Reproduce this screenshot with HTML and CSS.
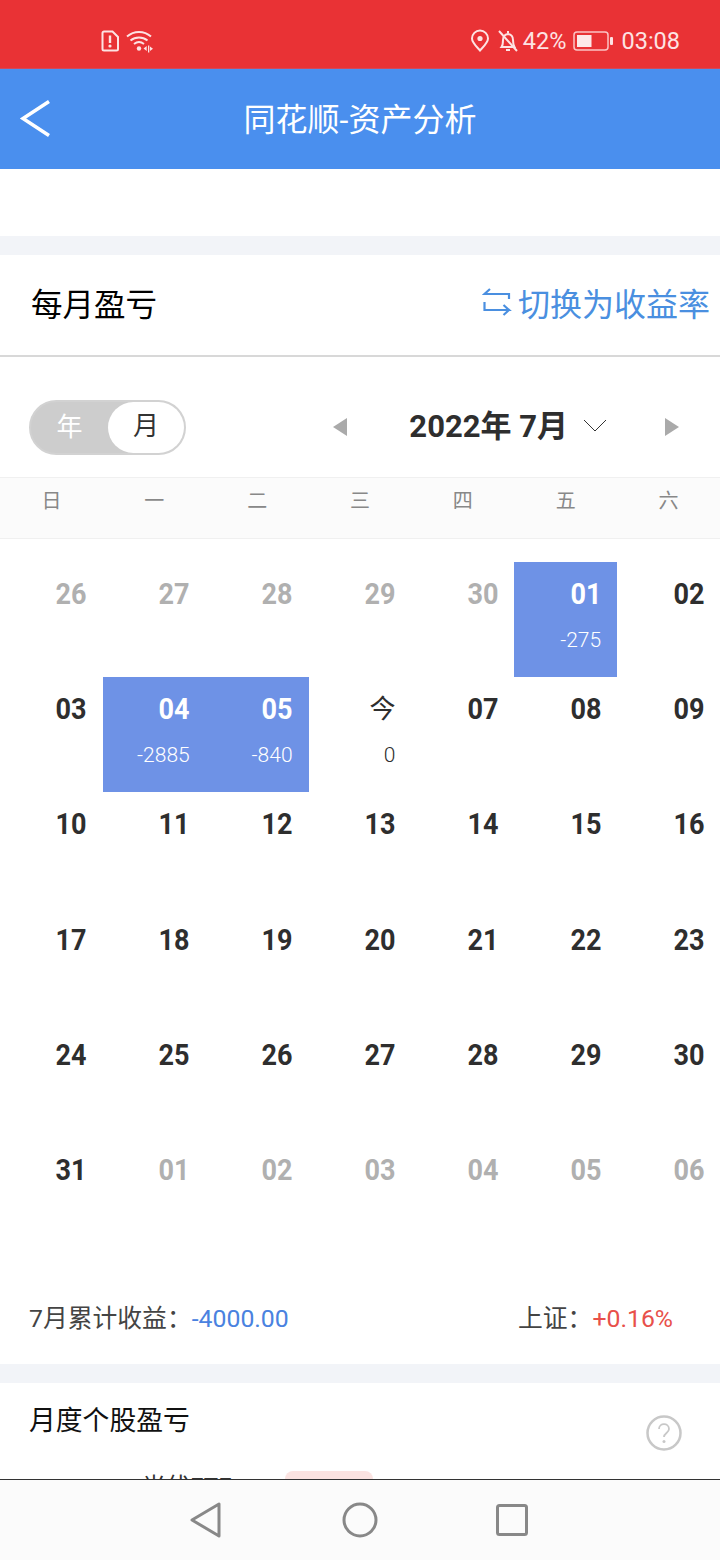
FILE: index.html
```html
<!DOCTYPE html>
<html>
<head>
    <title>同花顺-资产分析</title>
    <link rel="stylesheet" href="styles.css">
</head>
<body>
    <div class="status-bar">
        <div class="status-left">
            <svg width="19" height="24" viewBox="0 0 19 24"><path d="M3 2.500h8.500l5.500 5.500v12a1.500 1.500 0 0 1-1.500 1.500h-12.500a1.500 1.500 0 0 1-1.500-1.500v-16a1.500 1.500 0 0 1 1.500-1.500z" fill="none" stroke="#fde3e3" stroke-width="2"/><path d="M9 6.500v7.500" stroke="#fde3e3" stroke-width="2.400"/><circle cx="9" cy="17" r="1.600" fill="#fde3e3"/></svg>
            <svg width="27" height="24" viewBox="0 0 27 24"><path d="M1 7.500c7-6 17-6 24 0M4.500 11.500c5-4 12-4 17 0M8 15c3-2.300 7-2.300 10 0" fill="none" stroke="#fde3e3" stroke-width="2"/><circle cx="13" cy="19.500" r="2.200" fill="#fde3e3"/><path d="M17.500 19.500l3.200-2.500v5zM22 16.500h1.300v7h-1.300zM24 17.500l3 2.200-3 2.200z" fill="#fde3e3"/></svg>
        </div>
        <div class="status-right">
            <svg class="pin" width="20" height="24" viewBox="0 0 20 24"><path d="M10 21.500c-4-4.500-8-8-8-12a8 8 0 0 1 16 0c0 4-4 7.500-8 12z" fill="none" stroke="#fde3e3" stroke-width="2"/><circle cx="10" cy="9.500" r="2.600" fill="#fde3e3"/></svg>
            <svg class="bell" width="20" height="24" viewBox="0 0 20 24"><path d="M3.500 18c1.500-2 1.500-4 1.500-7 0-3 2-5.500 5-6 3 .5 5 3 5 6 0 3 .5 5 1.500 7z" fill="none" stroke="#fde3e3" stroke-width="2"/><path d="M8 21h4M9 3h2M1 2l18 20" stroke="#fde3e3" stroke-width="2"/></svg>
            <span class="status-text">42%</span>
            <svg class="battery" width="40" height="20" viewBox="0 0 40 20"><rect x="1" y="1" width="34" height="18" rx="3" fill="none" stroke="#fbc4c4" stroke-width="1.500"/><rect x="4" y="4" width="14.500" height="12" fill="#fde9e9"/><rect x="37" y="6" width="3" height="8" rx="1" fill="#fde3e3"/></svg>
            <span class="status-text">03:08</span>
        </div>
    </div>

    <div class="app-header">
        <svg class="back" width="34" height="40" viewBox="0 0 34 40"><path d="M30 2.500L4 19.500l26 17" fill="none" stroke="#fff" stroke-width="3.500"/></svg>
        <span class="app-title">同花顺-资产分析</span>
    </div>

    <div class="content">
        <div class="blank-strip"></div>
        <div class="gap"></div>

        <div class="section-head">
            <span class="section-title">每月盈亏</span>
            <span class="switch-link">
                <svg width="30" height="30" viewBox="0 0 30 30"><path d="M8 2L2.500 7H27v5M2.500 15v8H27l-5.500-5M27 23l-5.500 5" fill="none" stroke="#4a8fe0" stroke-width="2.200"/></svg>
                切换为收益率
            </span>
        </div>

        <div class="toolbar">
            <div class="toggle">
                <span class="toggle-off">年</span>
                <span class="toggle-on">月</span>
            </div>
            <div class="month-nav">
                <span class="arrow-left"></span>
                <span class="month-label">2022年 7月</span>
                <svg class="chevron" width="24" height="14" viewBox="0 0 24 14"><path d="M1 1l11 11L23 1" fill="none" stroke="#333" stroke-width="1"/></svg>
                <span class="arrow-right"></span>
            </div>
        </div>

        <div class="week-row">
            <span>日</span><span>一</span><span>二</span><span>三</span><span>四</span><span>五</span><span>六</span>
        </div>

        <div class="calendar">
            <div class="day muted"><b>26</b></div>
            <div class="day muted"><b>27</b></div>
            <div class="day muted"><b>28</b></div>
            <div class="day muted"><b>29</b></div>
            <div class="day muted"><b>30</b></div>
            <div class="day loss"><b>01</b><i>-275</i></div>
            <div class="day"><b>02</b></div>
            <div class="day"><b>03</b></div>
            <div class="day loss"><b>04</b><i>-2885</i></div>
            <div class="day loss"><b>05</b><i>-840</i></div>
            <div class="day today"><b>今</b><i>0</i></div>
            <div class="day"><b>07</b></div>
            <div class="day"><b>08</b></div>
            <div class="day"><b>09</b></div>
            <div class="day"><b>10</b></div>
            <div class="day"><b>11</b></div>
            <div class="day"><b>12</b></div>
            <div class="day"><b>13</b></div>
            <div class="day"><b>14</b></div>
            <div class="day"><b>15</b></div>
            <div class="day"><b>16</b></div>
            <div class="day"><b>17</b></div>
            <div class="day"><b>18</b></div>
            <div class="day"><b>19</b></div>
            <div class="day"><b>20</b></div>
            <div class="day"><b>21</b></div>
            <div class="day"><b>22</b></div>
            <div class="day"><b>23</b></div>
            <div class="day"><b>24</b></div>
            <div class="day"><b>25</b></div>
            <div class="day"><b>26</b></div>
            <div class="day"><b>27</b></div>
            <div class="day"><b>28</b></div>
            <div class="day"><b>29</b></div>
            <div class="day"><b>30</b></div>
            <div class="day"><b>31</b></div>
            <div class="day muted"><b>01</b></div>
            <div class="day muted"><b>02</b></div>
            <div class="day muted"><b>03</b></div>
            <div class="day muted"><b>04</b></div>
            <div class="day muted"><b>05</b></div>
            <div class="day muted"><b>06</b></div>
        </div>

        <div class="summary">
            <span>7月累计收益：<em class="blue">-4000.00</em></span>
            <span>上证：<em class="red">+0.16%</em></span>
        </div>
        <div class="gap"></div>

        <div class="stock-head">
            <span class="stock-title">月度个股盈亏</span>
            <svg class="help" width="38" height="38" viewBox="0 0 38 38"><circle cx="19" cy="19" r="16.500" fill="none" stroke="#c8c8c8" stroke-width="2.500"/><path d="M14 15c0-6.500 10-6.500 10 0 0 4-5 4-5 8" fill="none" stroke="#c8c8c8" stroke-width="1.800"/><circle cx="19" cy="27.500" r="1.500" fill="#c8c8c8"/></svg>
        </div>
        <div class="stock-row">
            <span class="stock-name">光伏ETF</span>
            <span class="stock-tag"></span>
        </div>
    </div>

    <div class="nav-bar">
        <svg class="nav-back" width="34" height="38" viewBox="0 0 34 38"><path d="M30 3v32L3 19z" fill="none" stroke="#888" stroke-width="3" stroke-linejoin="round"/></svg>
        <svg width="36" height="36" viewBox="0 0 36 36"><circle cx="18" cy="18" r="16" fill="none" stroke="#888" stroke-width="3"/></svg>
        <svg width="34" height="34" viewBox="0 0 34 34"><rect x="2.500" y="2.500" width="29" height="29" rx="2" fill="none" stroke="#888" stroke-width="3"/></svg>
    </div>
</body>
</html>
```

FILE: styles.css
```css
* {
    box-sizing: border-box;
}

body {
    margin: 0;
    width: 720px;
    height: 1560px;
    display: flex;
    flex-direction: column;
    overflow: hidden;
    background: #fff;
    font-family: Roboto, "Noto Sans CJK SC", sans-serif;
    color: #333;
}

svg {
    display: block;
}

.status-bar {
    height: 69px;
    flex: none;
    display: flex;
    justify-content: space-between;
    align-items: center;
    padding: 14px 40px 0 101px;
    background: #e93235;
    border-bottom: 1px solid #d04a5a;
}

.status-left,
.status-right {
    display: flex;
    align-items: center;
}

.status-left {
    gap: 6px;
}

.status-text {
    font-size: 23.5px;
    color: #fde3e3;
}

.pin {
    margin-right: 8px;
}

.bell {
    margin-right: 5px;
}

.battery {
    margin: 0 8px 0 7px;
}

.app-header {
    height: 100px;
    flex: none;
    position: relative;
    display: flex;
    align-items: center;
    justify-content: center;
    padding-bottom: 5px;
    background: #4a8fee;
}

.back {
    position: absolute;
    left: 19px;
    top: 30px;
}

.app-title {
    font-size: 32px;
    color: #fff;
}

.content {
    flex: 1;
    overflow: hidden;
    min-height: 0;
}

.blank-strip {
    height: 67px;
}

.gap {
    height: 19px;
    background: #f2f4f8;
}

.section-head {
    height: 102px;
    display: flex;
    justify-content: space-between;
    align-items: center;
    padding: 0 10px 7px 31px;
    border-bottom: 2px solid #d8d8d8;
}

.section-title {
    font-size: 31.5px;
    color: #000;
}

.switch-link {
    display: flex;
    align-items: center;
    gap: 6px;
    font-size: 32px;
    color: #4a8fe0;
}

.toolbar {
    height: 120px;
    display: flex;
    align-items: center;
    justify-content: space-between;
    padding: 20px 41px 0 29px;
}

.toggle {
    width: 157px;
    height: 55px;
    display: flex;
    align-items: center;
    border-radius: 28px;
    background: #cdcdcd;
    border: 2px solid #d2d2d2;
    font-size: 26px;
}

.toggle-off {
    width: 77px;
    text-align: center;
    color: #fff;
    padding-bottom: 6px;
}

.toggle-on {
    flex: 1;
    height: 51px;
    line-height: 49px;
    text-align: center;
    background: #fff;
    border-radius: 26px;
}

.month-nav {
    display: flex;
    align-items: center;
}

.arrow-left,
.arrow-right {
    width: 0;
    height: 0;
    border-top: 9px solid transparent;
    border-bottom: 9px solid transparent;
}

.arrow-left {
    border-right: 14px solid #aaa;
    margin-right: 62px;
}

.arrow-right {
    border-left: 14px solid #aaa;
    margin-left: 58px;
}

.month-label {
    padding-bottom: 8px;
    font-size: 31px;
    font-weight: 700;
    color: #2e2e2e;
}

.chevron {
    margin: 0 0 3px 15px;
}

.week-row {
    height: 62px;
    display: grid;
    grid-template-columns: repeat(7, minmax(0, 1fr));
    background: #fbfbfb;
    border-top: 1px solid #f0f0f0;
    border-bottom: 1px solid #f0f0f0;
    font-size: 20px;
    color: #888;
}

.week-row span {
    padding-top: 7px;
    text-align: center;
}

.calendar {
    display: grid;
    grid-template-columns: repeat(7, minmax(0, 1fr));
    grid-auto-rows: 115.2px;
    margin-top: 23px;
    height: 739px;
}

.day {
    display: flex;
    flex-direction: column;
    align-items: flex-end;
    padding: 15px 16px 0 0;
    color: #2e2e2e;
}

.day b {
    font-size: 30px;
    line-height: 34px;
    font-weight: 700;
    transform: scaleX(0.9);
    transform-origin: right;
}

.day i {
    font-style: normal;
    font-size: 21px;
    font-weight: 300;
    line-height: 24px;
    margin-top: 17px;
}

.muted {
    color: #b0b0b0;
}

.loss {
    background: #6e92e6;
    color: #fff;
}

.today b {
    font-size: 26px;
    font-weight: 400;
    transform: none;
}

.summary {
    height: 63px;
    display: flex;
    justify-content: space-between;
    align-items: flex-start;
    padding: 0 47px 0 29px;
    font-size: 24.8px;
    line-height: 36px;
    color: #444;
}

.summary em {
    font-style: normal;
}

.blue {
    color: #4a82e0;
}

.red {
    color: #e8504a;
}

.stock-head {
    height: 88px;
    display: flex;
    justify-content: space-between;
    align-items: flex-start;
    padding: 20px 37px 0 29px;
}

.stock-title {
    font-size: 26.8px;
    line-height: 36px;
    color: #111;
}

.help {
    margin-top: 11px;
}

.stock-row {
    display: flex;
    align-items: flex-start;
    padding-left: 142px;
    margin-top: -4px;
}

.stock-name {
    font-size: 24px;
    color: #333;
}

.stock-tag {
    width: 88px;
    height: 30px;
    margin: 4px 0 0 54px;
    border-radius: 8px;
    background: #fbe3e1;
}

.nav-bar {
    height: 81px;
    flex: none;
    display: flex;
    align-items: center;
    justify-content: center;
    gap: 117px;
    background: #fbfbfb;
    border-top: 1px solid #333;
}

.nav-back {
    margin: 0 2px 0 -2px;
}
```
